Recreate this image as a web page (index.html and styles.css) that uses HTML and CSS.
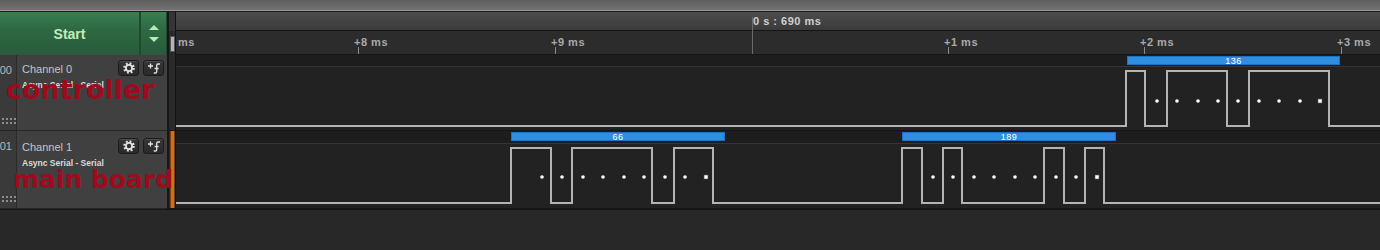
FILE: index.html
```html
<!DOCTYPE html>
<html lang="en">
<head>
    <meta charset="UTF-8">
    <title>Logic</title>
    <link rel="stylesheet" href="styles.css">
</head>
<body>
    <div class="topbar"></div>
    <div class="app">
        <!-- start / capture -->
        <div class="start-cell">
            <div class="start">Start</div>
            <div class="spin">
                <span class="tri up"></span>
                <span class="tri down"></span>
            </div>
        </div>
        <div class="split split-head"></div>
        <div class="tl-head"><span class="tl-time">0 s : 690 ms</span></div>
        <div class="split split-ruler"><span class="thumb"></span></div>
        <div class="ruler">
            <span class="tick" style="left:182px"></span>
            <span class="tick" style="left:379px"></span>
            <span class="tick center" style="left:576px"></span>
            <span class="tick" style="left:772px"></span>
            <span class="tick" style="left:968px"></span>
            <span class="tick" style="left:1165px"></span>
            <span class="mark" style="left:2px">ms</span>
            <span class="mark" style="left:178px">+8 ms</span>
            <span class="mark" style="left:375px">+9 ms</span>
            <span class="mark" style="left:768px">+1 ms</span>
            <span class="mark" style="left:964px">+2 ms</span>
            <span class="mark" style="left:1161px">+3 ms</span>
        </div>

        <!-- channel 0 -->
        <div class="chan ch0">
            <div class="chan-num">
                <span>00</span>
                <span class="grip"></span>
            </div>
            <div class="chan-body">
                <div class="chan-top">
                    <span class="chan-name">Channel 0</span>
                    <span class="btn">
                        <svg width="12" height="12" viewBox="0 0 12 12"><circle cx="6" cy="6" r="4.6" fill="none" stroke="#e2e2e2" stroke-width="2.4" stroke-dasharray="1.8 1.81"/><circle cx="6" cy="6" r="3.1" fill="none" stroke="#e2e2e2" stroke-width="1.8"/></svg>
                    </span>
                    <span class="btn">
                        <svg width="14" height="12" viewBox="0 0 14 12"><path d="M1 4h5M3.5 1.5v5" stroke="#e2e2e2" stroke-width="1.3" fill="none"/><path d="M13 2h-2q-1.3 0-1.3 1.3v6.4q0 1.3-1.3 1.3h-1.6M7.6 6.5h4" stroke="#e2e2e2" stroke-width="1.3" fill="none"/></svg>
                    </span>
                </div>
                <div class="chan-sub">Async Serial - Serial</div>
            </div>
        </div>
        <div class="split split-ch"></div>
        <div class="track">
            <div class="bubbles">
                <span class="bubble" style="left:951px;width:213px">136</span>
            </div>
            <svg class="wave" width="1204" height="63">
                <polyline points="0,59 950,59 950,4 969,4 969,59 991,59 991,4 1051,4 1051,59 1073,59 1073,4 1153,4 1153,59 1204,59"/>
                <g class="dots">
                    <circle cx="981" cy="34" r="1.8"/><circle cx="1001" cy="34" r="1.8"/><circle cx="1022" cy="34" r="1.8"/><circle cx="1042" cy="34" r="1.8"/>
                    <circle cx="1062" cy="34" r="1.8"/><circle cx="1083" cy="34" r="1.8"/><circle cx="1103" cy="34" r="1.8"/><circle cx="1124" cy="34" r="1.8"/>
                    <rect x="1142" y="32" width="4" height="4"/>
                </g>
            </svg>
        </div>

        <!-- channel 1 -->
        <div class="chan ch1">
            <div class="chan-num">
                <span>01</span>
                <span class="grip"></span>
            </div>
            <div class="chan-body">
                <div class="chan-top">
                    <span class="chan-name">Channel 1</span>
                    <span class="btn">
                        <svg width="12" height="12" viewBox="0 0 12 12"><circle cx="6" cy="6" r="4.6" fill="none" stroke="#e2e2e2" stroke-width="2.4" stroke-dasharray="1.8 1.81"/><circle cx="6" cy="6" r="3.1" fill="none" stroke="#e2e2e2" stroke-width="1.8"/></svg>
                    </span>
                    <span class="btn">
                        <svg width="14" height="12" viewBox="0 0 14 12"><path d="M1 4h5M3.5 1.5v5" stroke="#e2e2e2" stroke-width="1.3" fill="none"/><path d="M13 2h-2q-1.3 0-1.3 1.3v6.4q0 1.3-1.3 1.3h-1.6M7.6 6.5h4" stroke="#e2e2e2" stroke-width="1.3" fill="none"/></svg>
                    </span>
                </div>
                <div class="chan-sub">Async Serial - Serial</div>
            </div>
        </div>
        <div class="split split-ch"><span class="active-bar"></span></div>
        <div class="track">
            <div class="bubbles">
                <span class="bubble" style="left:335px;width:214px">66</span>
                <span class="bubble" style="left:726px;width:214px">189</span>
            </div>
            <svg class="wave" width="1204" height="63">
                <polyline points="0,59 335,59 335,4 375,4 375,59 396,59 396,4 476,4 476,59 498,59 498,4 537,4 537,59 726,59 726,4 746,4 746,59 767,59 767,4 786,4 786,59 868,59 868,4 888,4 888,59 909,59 909,4 928,4 928,59 1204,59"/>
                <g class="dots">
                    <circle cx="366" cy="33" r="1.8"/><circle cx="386" cy="33" r="1.8"/><circle cx="407" cy="33" r="1.8"/><circle cx="427" cy="33" r="1.8"/>
                    <circle cx="448" cy="33" r="1.8"/><circle cx="468" cy="33" r="1.8"/><circle cx="489" cy="33" r="1.8"/><circle cx="509" cy="33" r="1.8"/>
                    <rect x="528" y="31" width="4" height="4"/>
                    <circle cx="757" cy="33" r="1.8"/><circle cx="777" cy="33" r="1.8"/><circle cx="798" cy="33" r="1.8"/><circle cx="818" cy="33" r="1.8"/>
                    <circle cx="839" cy="33" r="1.8"/><circle cx="859" cy="33" r="1.8"/><circle cx="880" cy="33" r="1.8"/><circle cx="900" cy="33" r="1.8"/>
                    <rect x="919" y="31" width="4" height="4"/>
                </g>
            </svg>
        </div>
    </div>

    <!-- labels written over the screenshot -->
    <div class="note note-ctrl">controller</div>
    <div class="note note-main">main board</div>
</body>
</html>
```

FILE: styles.css
```css
body {
    margin: 0;
    background-color: #282828;
    font-family: "Liberation Sans", Arial, sans-serif;
    overflow: hidden;
}

.topbar {
    height: 10px;
    background: linear-gradient(#5e5e5e, #727272);
    border-bottom: 1px solid #989898;
}

.app {
    display: grid;
    grid-template-columns: 167px 9px 1fr;
    grid-template-rows: 19px 24px 76px 78px;
    border-top: 1px solid #1c1c1c;
    border-bottom: 1px solid #161616;
}

/* Start button */
.start-cell {
    grid-row: 1 / 3;
    display: flex;
    background-color: #1d3d28;
}

.start {
    width: 139px;
    display: flex;
    align-items: center;
    justify-content: center;
    color: #c2ecba;
    font-size: 14px;
    font-weight: bold;
    background: linear-gradient(#397f51, #2e6943 40%, #285b3a);
    border-right: 2px solid #1f4a2d;
}

.spin {
    flex: 1;
    display: flex;
    flex-direction: column;
    align-items: center;
    justify-content: center;
    gap: 7px;
    background: linear-gradient(#397f51, #2e6943 40%, #285b3a);
    border-right: 1px solid #1f4a2d;
}

.tri {
    width: 0;
    height: 0;
    border-left: 5px solid transparent;
    border-right: 5px solid transparent;
}

.tri.up {
    border-bottom: 5px solid #b7ecb4;
}

.tri.down {
    border-top: 5px solid #b7ecb4;
}

/* splitter column */
.split {
    background-color: #2a2a2a;
    border-left: 2px solid #171717;
    border-right: 1px solid #121212;
    position: relative;
}

.split-head {
    background-color: #353535;
}

.split-ruler .thumb {
    position: absolute;
    left: 1px;
    top: 5px;
    width: 3px;
    height: 14px;
    background-color: #b4b4b4;
    border: 1px solid #555;
}

.split-ch {
    border-bottom: 1px solid #141414;
}

.active-bar {
    position: absolute;
    left: 1px;
    top: 0;
    bottom: 0;
    width: 3px;
    background-color: #c9731f;
    border-left: 1px solid #7a3f10;
    border-right: 1px solid #7a3f10;
}

/* timeline header + ruler */
.tl-head {
    background: linear-gradient(#4c4c4c, #3b3b3b);
    border-bottom: 1px solid #141414;
    position: relative;
}

.tl-time {
    position: absolute;
    left: 577px;
    top: 3px;
    color: #d0d0d0;
    font-size: 11px;
    font-weight: bold;
    letter-spacing: 0.5px;
}

.ruler {
    position: relative;
    overflow: hidden;
    background-color: #2c2c2c;
    border-bottom: 1px solid #141414;
}

.tick {
    position: absolute;
    bottom: 0;
    width: 1px;
    height: 7px;
    background-color: #8a8a8a;
}

.tick.center {
    height: 23px;
    background-color: #6a6a6a;
}

.tl-head::after {
    content: "";
    position: absolute;
    left: 576px;
    top: 5px;
    bottom: -1px;
    width: 1px;
    background-color: #6a6a6a;
}

.mark {
    position: absolute;
    top: 5px;
    color: #a9a9a9;
    font-size: 11px;
    font-weight: bold;
    letter-spacing: 0.5px;
    white-space: nowrap;
}

/* channel panels */
.chan {
    display: flex;
    background-color: #404040;
    border-bottom: 1px solid #262626;
}

.chan-num {
    width: 17px;
    display: flex;
    flex-direction: column;
    align-items: flex-end;
    justify-content: space-between;
    padding: 9px 4px 6px 0;
    box-sizing: border-box;
    background-color: #3a3a3a;
    border-right: 1px solid #2b2b2b;
    color: #b8b8b8;
    font-size: 11px;
    overflow: hidden;
}

.grip {
    align-self: flex-start;
    margin-left: 1px;
    width: 15px;
    height: 7px;
    background-image: radial-gradient(circle, #8c8c8c 0.9px, transparent 1.2px);
    background-size: 4px 4px;
}

.chan-body {
    flex: 1;
    padding: 5px 3px 0 5px;
}

.chan-top {
    display: flex;
    align-items: flex-start;
    gap: 4px;
}

.chan-name {
    flex: 1;
    margin-top: 3px;
    color: #c4c4c4;
    font-size: 11px;
}

.btn {
    width: 19px;
    height: 14px;
    display: flex;
    align-items: center;
    justify-content: center;
    background: linear-gradient(#363636, #2a2a2a);
    border: 1px solid #1c1c1c;
    border-radius: 3px;
    box-shadow: inset 0 1px 0 #4c4c4c;
}

.chan-sub {
    margin-top: 4px;
    color: #dadada;
    font-size: 8.5px;
    font-weight: bold;
}

.ch1 .chan-body {
    padding-top: 7px;
}

/* tracks */
.track {
    display: flex;
    flex-direction: column;
    background-color: #222222;
    border-bottom: 1px solid #141414;
}

.bubbles {
    position: relative;
    height: 11px;
    background-color: #1d1d1d;
    border-bottom: 1px solid #353535;
}

.ch1 ~ .track .bubbles {
    height: 12px;
}

.bubble {
    position: absolute;
    top: 1px;
    height: 9px;
    box-sizing: border-box;
    background-color: #2e8fe0;
    border: 1px solid #1f70c2;
    color: #ffffff;
    font-size: 9px;
    line-height: 8px;
    text-align: center;
    letter-spacing: 0.5px;
}

.wave {
    display: block;
}

.wave polyline {
    fill: none;
    stroke: #b4b4b4;
    stroke-width: 2;
}

.dots circle {
    fill: #ffffff;
}

.dots rect {
    fill: #ffffff;
    stroke: #555;
    stroke-width: 0.6;
}

/* red annotations */
.note {
    position: absolute;
    color: #9e0a1e;
    font-family: "DejaVu Sans", sans-serif;
    font-weight: bold;
    line-height: 1;
}

.note-ctrl {
    left: 6px;
    top: 76px;
    font-size: 27px;
}

.note-main {
    left: 13px;
    top: 167px;
    font-size: 25px;
}
```
